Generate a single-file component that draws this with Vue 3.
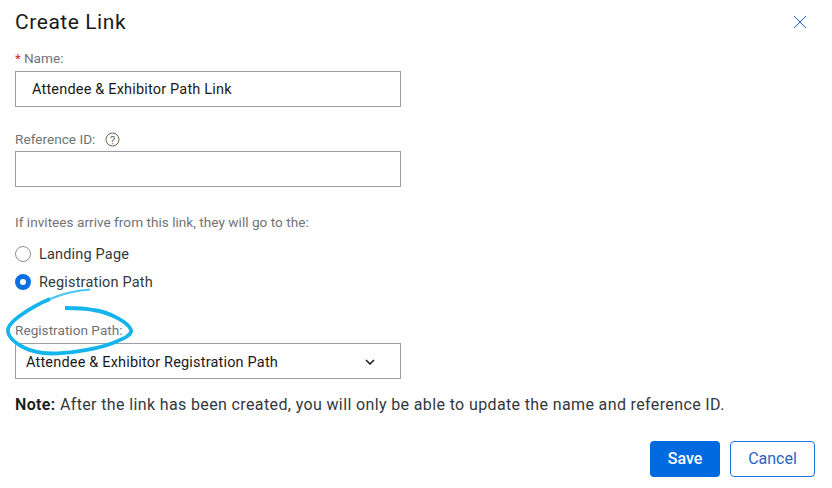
<template>
  <div class="dialog">
    <header class="dialog-head">
      <h1>Create Link</h1>
      <button class="close" aria-label="Close">
        <svg width="14" height="14" viewBox="0 0 14 14">
          <path d="M1 1L13 13M13 1L1 13" stroke="#2a62c9" stroke-width="1" fill="none" />
        </svg>
      </button>
    </header>

    <div class="field name-field">
      <label><span class="req">*</span>Name:</label>
      <input class="text-input" :value="name" />
    </div>

    <div class="field ref-field">
      <label>
        Reference ID:
        <svg class="help" width="15" height="15" viewBox="0 0 15 15">
          <circle cx="7.5" cy="7.5" r="6.5" stroke="#6b6455" fill="none" />
          <text x="7.5" y="11.5" text-anchor="middle">?</text>
        </svg>
      </label>
      <input class="text-input" />
    </div>

    <p class="hint">If invitees arrive from this link, they will go to the:</p>

    <div class="radios">
      <div v-for="opt in options" :key="opt" class="radio-row">
        <span class="radio" :class="{ checked: opt === selected }"></span>
        <span>{{ opt }}</span>
      </div>
    </div>

    <div class="field path-field">
      <label>Registration Path:</label>
      <div class="select">
        <span>Attendee &amp; Exhibitor Registration Path</span>
        <svg width="10" height="6" viewBox="0 0 10 6">
          <path d="M1 1L5 5L9 1" stroke="#1a1a1a" stroke-width="1.5" fill="none" />
        </svg>
      </div>
      <!-- hand drawn annotation over the label -->
      <svg class="scribble" width="140" height="72" viewBox="0 0 140 72">
        <path d="M90 4.5C78 5.5 64 8 50 14" stroke="#4cc5f0" stroke-width="2.2" fill="none" />
        <path
          d="M50 14C40 18 31 23 21 30C11 37 7 42 8 47C10 56 25 66 43 68C60 70 95 65 113 58C125 53 132 50 131 45C129 38 110 27 93 25C84 23 74 23 65 23"
          stroke="#14b4ec" stroke-width="3.8" fill="none"
        />
      </svg>
    </div>

    <p class="note"><b>Note:</b> After the link has been created, you will only be able to update the name and reference ID.</p>

    <footer class="actions">
      <button class="btn primary">Save</button>
      <button class="btn ghost">Cancel</button>
    </footer>
  </div>
</template>

<script setup>
import { ref } from 'vue';

const name = ref('Attendee & Exhibitor Path Link');
const options = ['Landing Page', 'Registration Path'];
const selected = ref('Registration Path');
</script>

<style scoped>
.dialog {
  width: 832px;
  height: 488px;
  box-sizing: border-box;
  padding: 8px 17px 0 15px;
  background: #fff;
  color: #1a1a1a;
  font-family: Roboto, "Liberation Sans", sans-serif;
  font-size: 14.5px;
  letter-spacing: 0.18px;
  overflow: hidden;
}

.dialog-head {
  display: flex;
  justify-content: space-between;
  align-items: center;
  height: 28px;
}

h1 {
  margin: 0;
  font-size: 21px;
  font-weight: 400;
  letter-spacing: 0.55px;
}

.close {
  border: 0;
  background: none;
  padding: 0;
  margin-right: 8px;
  display: flex;
}

.field {
  width: 386px;
  position: relative;
}

.name-field {
  margin-top: 14px;
}

.name-field label,
.path-field label {
  margin-bottom: 5px;
}

.ref-field {
  margin-top: 24px;
}

.path-field {
  margin-top: 30px;
}

label {
  display: flex;
  align-items: center;
  gap: 3px;
  height: 16px;
  margin-bottom: 4px;
  font-size: 13.6px;
  letter-spacing: 0.02px;
  color: #6f7377;
}

.req {
  color: #c8321e;
}

.help {
  margin-left: 7px;
}

.help text {
  font-size: 11px;
  fill: #6b6455;
}

.text-input {
  display: block;
  width: 100%;
  height: 36px;
  box-sizing: border-box;
  border: 1px solid #9b9ea3;
  padding: 0 16px;
  font: inherit;
  letter-spacing: inherit;
  color: #1a1a1a;
  outline: none;
}

.hint {
  margin: 27px 0 0;
  height: 16px;
  line-height: 16px;
  font-size: 13.6px;
  letter-spacing: 0.02px;
  color: #6f7377;
}

.radios {
  margin-top: 14px;
  display: flex;
  flex-direction: column;
  gap: 8px;
}

.radio-row {
  display: flex;
  align-items: center;
  gap: 8px;
  height: 20px;
  color: #33383d;
}

.radio {
  width: 16px;
  height: 16px;
  box-sizing: border-box;
  border: 1px solid #8d9095;
  border-radius: 50%;
}

.radio.checked {
  border: 5px solid #0a6fe0;
}

.select {
  display: flex;
  align-items: center;
  justify-content: space-between;
  height: 36px;
  box-sizing: border-box;
  border: 1px solid #9b9ea3;
  padding: 2px 25px 0 10px;
}

.scribble {
  position: absolute;
  left: -15px;
  top: -37px;
  pointer-events: none;
}

.note {
  margin: 17px 0 0;
  line-height: 18px;
  font-size: 16px;
  letter-spacing: 0.37px;
  color: #33383d;
}

.note b {
  font-weight: 600;
  color: #1a1a1a;
}

.actions {
  display: flex;
  justify-content: flex-end;
  gap: 10px;
  margin-top: 27px;
}

.btn {
  height: 36px;
  box-sizing: border-box;
  border-radius: 4px;
  padding: 0 0 2px;
  font: inherit;
  font-size: 16px;
}

.primary {
  width: 70px;
  border: 0;
  background: #006ae1;
  color: #fff;
  font-weight: 500;
}

.ghost {
  width: 85px;
  border: 1px solid #1a73e0;
  background: #fff;
  color: #2a62c9;
}
</style>
